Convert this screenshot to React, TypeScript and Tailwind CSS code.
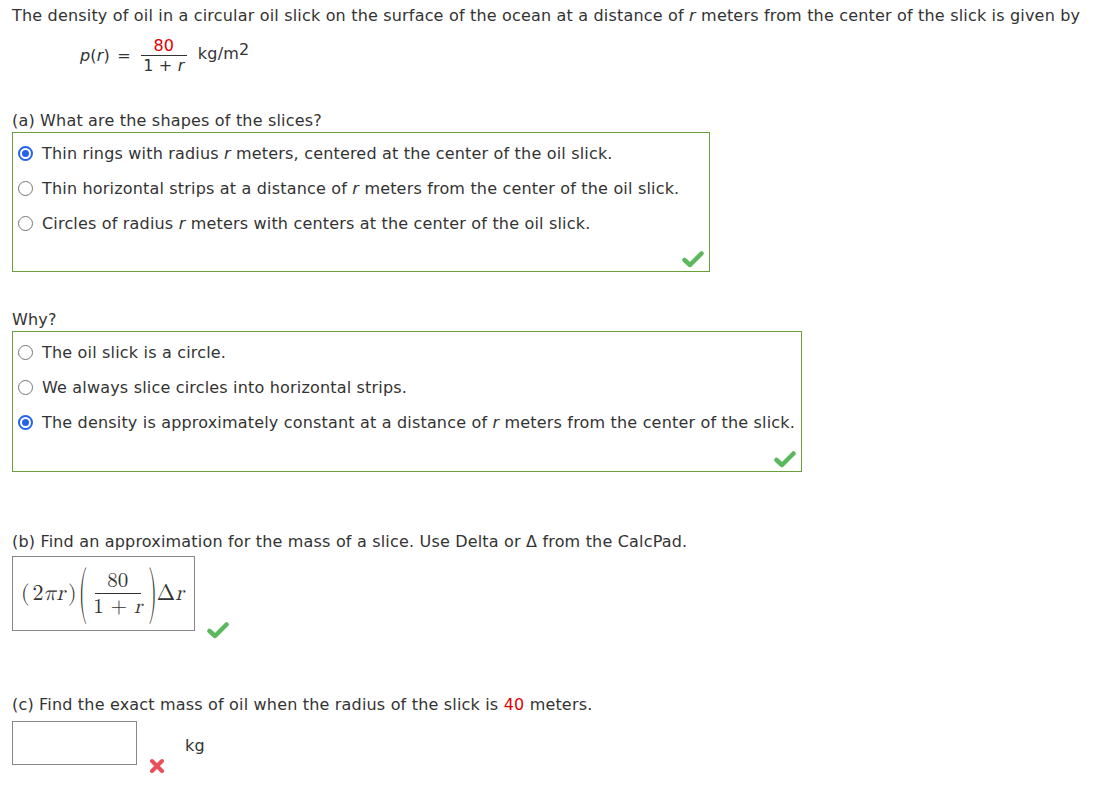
import React from "react";

const txt = "text-[#333333]";

function Radio({ checked }: { checked?: boolean }) {
  return checked ? (
    <span className="flex h-[15px] w-[15px] shrink-0 items-center justify-center rounded-full border-2 border-[#2563eb] bg-white">
      <span className="h-[7px] w-[7px] rounded-full bg-[#2563eb]" />
    </span>
  ) : (
    <span className="h-[15px] w-[15px] shrink-0 rounded-full border border-[#767676] bg-white" />
  );
}

function Check() {
  return (
    <svg width="22" height="18" viewBox="0 0 22 18">
      <path d="M2.5 10 L8 15 L19.5 3.5" fill="none" stroke="#5cb85c" strokeWidth="4.5" strokeLinecap="round" strokeLinejoin="round" />
    </svg>
  );
}

function Cross() {
  return (
    <svg width="16" height="16" viewBox="0 0 16 16">
      <path d="M3 3 L13 13 M13 3 L3 13" stroke="#e8505b" strokeWidth="4" strokeLinecap="round" />
    </svg>
  );
}

function Choice({ checked, children }: { checked?: boolean; children: React.ReactNode }) {
  return (
    <div className="flex h-[35px] items-center gap-[9px] pl-[5px]">
      <Radio checked={checked} />
      <span>{children}</span>
    </div>
  );
}

export default function App() {
  const r = <i>r</i>;
  return (
    <div
      className={`min-h-[790px] bg-white px-[12px] pt-[5px] text-[16px] tracking-[0.18px] ${txt}`}
      style={{ fontFamily: "Verdana, 'DejaVu Sans', sans-serif" }}
    >
      <p className="leading-[22px]">
        The density of oil in a circular oil slick on the surface of the ocean at a distance of {r} meters from the center of the slick is given by
      </p>

      <div className="mt-[9px] flex items-center pl-[68px]">
        <span>
          <i>p</i>(<i>r</i>) <span className="ml-[2px]">=</span>
        </span>
        <span className="ml-[10px] inline-flex flex-col items-center leading-[19px]">
          <span className="px-[2px] text-[#e00000]">80</span>
          <span className="h-px w-[46px] bg-[#333]" />
          <span>
            1 + <i>r</i>
          </span>
        </span>
        <span className="-mt-[3px] ml-[11px]">
          kg/m<span className="relative -top-[4px]">2</span>
        </span>
      </div>

      <p className="mt-[35px] leading-[22px]">(a) What are the shapes of the slices?</p>
      <div className="relative h-[140px] w-[698px] border border-[#6a9f3a] pt-[3px]">
        <Choice checked>Thin rings with radius {r} meters, centered at the center of the oil slick.</Choice>
        <Choice>Thin horizontal strips at a distance of {r} meters from the center of the oil slick.</Choice>
        <Choice>Circles of radius {r} meters with centers at the center of the oil slick.</Choice>
        <span className="absolute bottom-[3px] right-[5px]">
          <Check />
        </span>
      </div>

      <p className="mt-[37px] leading-[22px]">Why?</p>
      <div className="relative h-[141px] w-[790px] border border-[#6a9f3a] pt-[3px]">
        <Choice>The oil slick is a circle.</Choice>
        <Choice>We always slice circles into horizontal strips.</Choice>
        <Choice checked>The density is approximately constant at a distance of {r} meters from the center of the slick.</Choice>
        <span className="absolute bottom-[3px] right-[5px]">
          <Check />
        </span>
      </div>

      <p className="mt-[59px] leading-[22px]">
        (b) Find an approximation for the mass of a slice. Use Delta or Δ from the CalcPad.
      </p>
      <div className="mt-[3px] flex items-end gap-[12px]">
        <div
          className="flex h-[75px] w-[183px] items-center border border-[#888] pl-[8px] text-[22px] tracking-normal text-[#333]"
          style={{ fontFamily: "'Latin Modern Math', 'DejaVu Serif', 'Liberation Serif', serif" }}
        >
          <span className="font-light">(</span>
          <span className="mx-[3px]">
            2<i>πr</i>
          </span>
          <span className="font-light">)</span>
          <span className="ml-[2px] scale-y-[2.6] font-light">(</span>
          <span className="mx-[6px] inline-flex flex-col items-center text-[21px] leading-[25px]">
            <span>80</span>
            <span className="h-px w-[46px] bg-[#333]" />
            <span>
              1 + <i>r</i>
            </span>
          </span>
          <span className="scale-y-[2.6] font-light">)</span>
          <span>
            Δ<i>r</i>
          </span>
        </div>
        <span className="mb-[-8px]">
          <Check />
        </span>
      </div>

      <p className="mt-[63px] leading-[22px]">
        (c) Find the exact mass of oil when the radius of the slick is <span className="text-[#e00000]">40</span> meters.
      </p>
      <div className="mt-[5px] flex items-start">
        <div className="h-[44px] w-[125px] border border-[#888]" />
        <span className="ml-[12px] mt-[37px]">
          <Cross />
        </span>
        <span className="ml-[20px] mt-[13px]">kg</span>
      </div>
    </div>
  );
}
